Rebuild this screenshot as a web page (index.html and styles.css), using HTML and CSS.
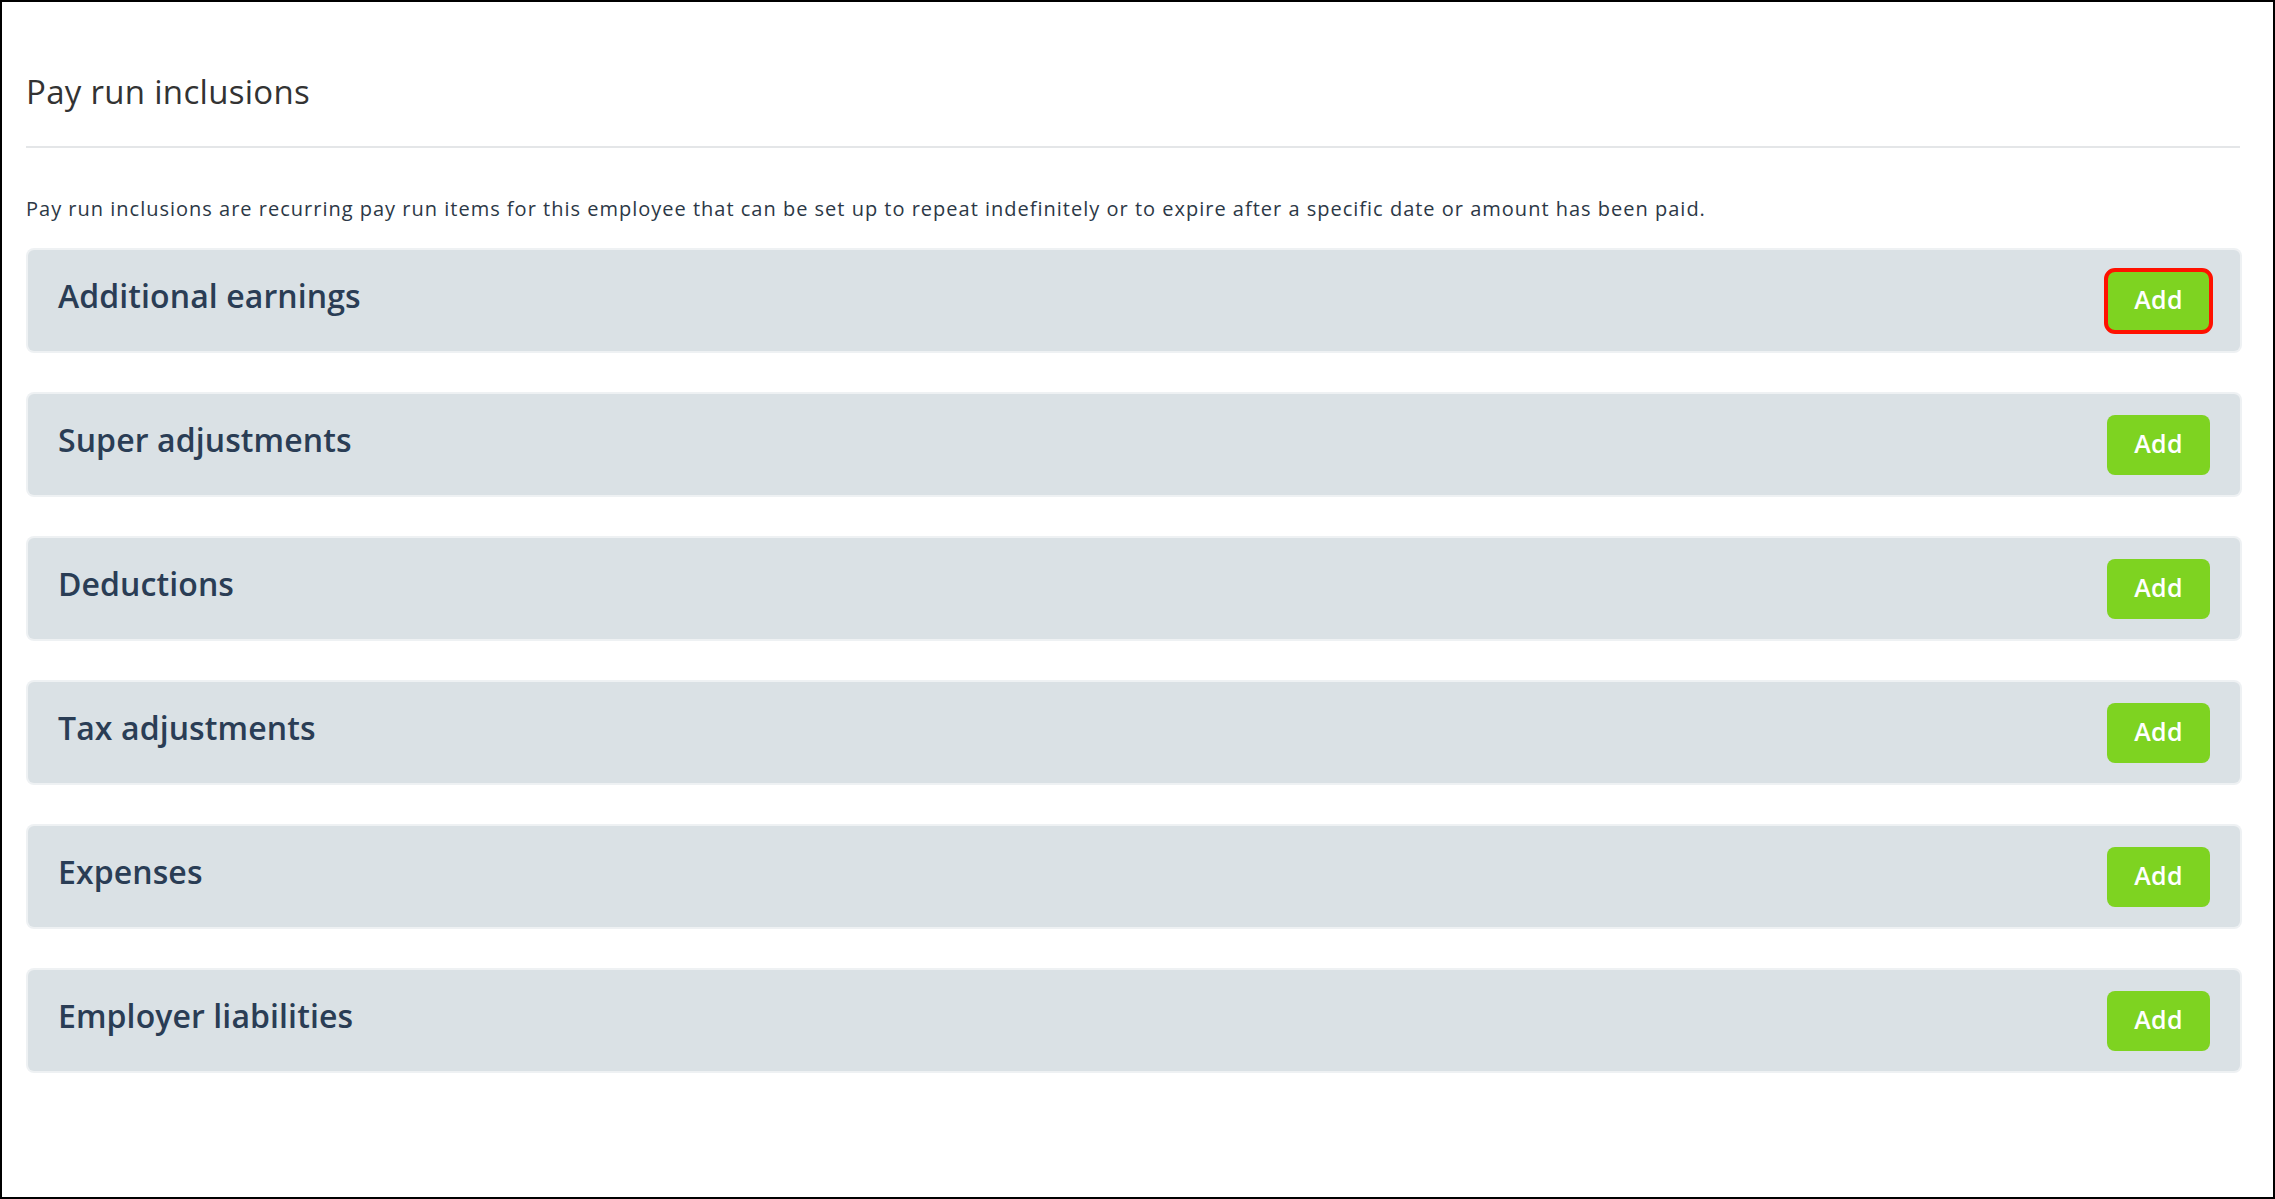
FILE: index.html
```html
<!DOCTYPE html>
<html lang="en">
<head>
<meta charset="utf-8">
<title>Pay run inclusions</title>
<link rel="stylesheet" href="styles.css">
</head>
<body>
<main class="page">
  <header class="page-header">
    <h1 class="page-title">Pay run inclusions</h1>
  </header>
  <p class="intro">Pay run inclusions are recurring pay run items for this employee that can be set up to repeat indefinitely or to expire after a specific date or amount has been paid.</p>
  <section class="panels">
    <div class="panel">
      <h2 class="panel-title">Additional earnings</h2>
      <button class="btn-add btn-highlight" type="button">Add</button>
    </div>
    <div class="panel">
      <h2 class="panel-title">Super adjustments</h2>
      <button class="btn-add" type="button">Add</button>
    </div>
    <div class="panel">
      <h2 class="panel-title">Deductions</h2>
      <button class="btn-add" type="button">Add</button>
    </div>
    <div class="panel">
      <h2 class="panel-title">Tax adjustments</h2>
      <button class="btn-add" type="button">Add</button>
    </div>
    <div class="panel">
      <h2 class="panel-title">Expenses</h2>
      <button class="btn-add" type="button">Add</button>
    </div>
    <div class="panel">
      <h2 class="panel-title">Employer liabilities</h2>
      <button class="btn-add" type="button">Add</button>
    </div>
  </section>
</main>
</body>
</html>
```

FILE: styles.css
```css
* { box-sizing: border-box; }

html, body {
  margin: 0;
  padding: 0;
  background: #ffffff;
}

body {
  height: 100vh;
  border: 2px solid #000000;
  font-family: "Open Sans", "Lato", "Liberation Sans", sans-serif;
  overflow: hidden;
}

.page {
  padding: 70px 33px 0 24px;
}

.page-header {
  border-bottom: 2px solid #e4e6e8;
  padding-bottom: 34px;
}

.page-title {
  margin: 0;
  font-size: 33px;
  line-height: 40px;
  font-weight: 400;
  color: #333333;
  letter-spacing: 0.3px;
}

.intro {
  margin: 47px 0 27px;
  font-size: 20px;
  line-height: 28px;
  color: #2c3846;
  letter-spacing: 1px;
}

.panels {
  display: flex;
  flex-direction: column;
  gap: 43px;
  padding-left: 2px;
}

.panel {
  height: 101px;
  display: flex;
  align-items: center;
  justify-content: space-between;
  padding: 0 30px 0 30px;
  background: #dae1e5;
  border-radius: 6px;
  box-shadow: 0 0 0 2px #eef1f3;
}

.panel-title {
  margin: 0 0 10px;
  font-size: 32px;
  line-height: 40px;
  font-weight: 600;
  color: #2a3d55;
  letter-spacing: 0.1px;
}

.btn-add {
  width: 103px;
  height: 60px;
  padding: 0 0 3px;
  border: none;
  border-radius: 8px;
  background: #7ed321;
  color: #ffffff;
  font-family: inherit;
  font-size: 25px;
  font-weight: 600;
  letter-spacing: 0.3px;
  cursor: pointer;
}

.btn-highlight {
  outline: 4px solid #ff1100;
  outline-offset: -1px;
}
```
